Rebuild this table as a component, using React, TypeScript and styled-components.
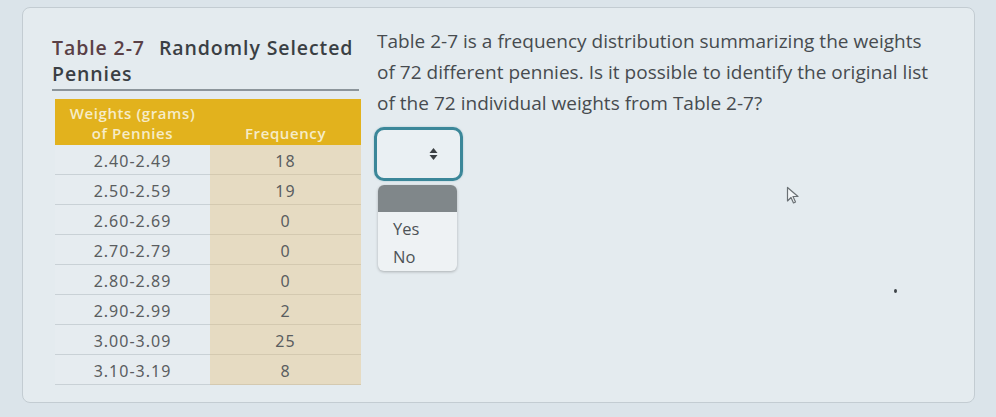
import React from "react";
import styled, { createGlobalStyle } from "styled-components";

const Global = createGlobalStyle`
  html, body { margin: 0; padding: 0; }
  body {
    background: #dbe4ea;
    width: 996px;
    height: 417px;
    overflow: hidden;
    font-family: "Noto Sans", "Liberation Sans", sans-serif;
  }
`;

const Page = styled.div`
  padding: 7px 21px 0 22px;
`;

const Card = styled.div`
  position: relative;
  box-sizing: border-box;
  height: 396px;
  border: 1.5px solid #c3ccd2;
  border-radius: 8px;
  background: #e4ebef;
  padding: 27px 20px 0 29px;
  display: flex;
  gap: 16px;
`;

const Left = styled.div`
  width: 309px;
  display: flex;
  flex-direction: column;
`;

const Title = styled.div`
  font-family: "Open Sans", "Noto Sans", sans-serif;
  font-size: 19.5px;
  font-weight: 600;
  line-height: 26px;
  color: #3a3f44;
  letter-spacing: 0.9px;
  padding-bottom: 2px;
  margin-right: 2px;
  border-bottom: 2px solid #8c959b;
  white-space: nowrap;
`;

const TableNo = styled.span`
  color: #5a4046;
  margin-right: 14px;
`;

const Table = styled.div`
  margin-top: 8px;
  margin-left: 3px;
  display: grid;
  grid-template-columns: 155px 151px;
`;

const HeadCell = styled.div`
  background: #e2b21d;
  height: 46px;
  box-sizing: border-box;
  padding-bottom: 2px;
  display: flex;
  flex-direction: column;
  justify-content: flex-end;
  align-items: center;
  font-family: "Open Sans", "Noto Sans", sans-serif;
  font-weight: 600;
  font-size: 15px;
  line-height: 20px;
  letter-spacing: 0.6px;
  color: #f6ecc8;
  text-align: center;
`;

const Cell = styled.div<{ $freq?: boolean }>`
  height: 30px;
  box-sizing: border-box;
  display: flex;
  align-items: center;
  justify-content: center;
  font-family: "Noto Sans", sans-serif;
  font-size: 16px;
  letter-spacing: 1px;
  color: #5a5d60;
  background: ${(p) => (p.$freq ? "#e6dbc2" : "#e6ecf0")};
  border-bottom: 1px solid ${(p) => (p.$freq ? "#d4c9b0" : "#c9d1d6")};
  padding-top: 3px;
`;

const Right = styled.div`
  display: flex;
  flex-direction: column;
  align-items: flex-start;
  margin-top: -9px;
`;

const Question = styled.p`
  margin: 0;
  font-family: "Open Sans", "Noto Sans", sans-serif;
  font-size: 19px;
  line-height: 31px;
  letter-spacing: 0.02px;
  color: #474b4f;
  white-space: nowrap;
`;

const SelectWrap = styled.div`
  position: relative;
  margin-top: 8px;
  margin-left: -3px;
`;

const SelectBox = styled.div`
  width: 89px;
  height: 54px;
  box-sizing: border-box;
  border: 3px solid #3b8799;
  border-radius: 10px;
  background: #eaf0f3;
  display: flex;
  align-items: center;
  justify-content: flex-end;
  padding-right: 22px;
  box-shadow: 0 0 2px rgba(60, 135, 153, 0.4);
`;

const Menu = styled.div`
  position: absolute;
  top: 58px;
  left: 4px;
  width: 79px;
  height: 86px;
  border-radius: 6px;
  overflow: hidden;
  background: #eef2f4;
  box-shadow: 0 1px 3px rgba(0, 0, 0, 0.25);
  display: flex;
  flex-direction: column;
`;

const MenuHead = styled.div`
  flex: 0 0 27px;
  margin-bottom: 3px;
  background: #80878a;
`;

const Option = styled.div`
  font-family: "Open Sans", "Noto Sans", sans-serif;
  font-size: 16.5px;
  line-height: 28px;
  padding-left: 15px;
  color: #4d5256;
`;

const Cursor = styled.div`
  position: absolute;
  left: 763px;
  top: 178px;
`;

const Dot = styled.div`
  position: absolute;
  left: 871px;
  top: 281px;
  width: 3px;
  height: 4px;
  border-radius: 50%;
  background: #3e4448;
`;

const rows: [string, string][] = [
  ["2.40-2.49", "18"],
  ["2.50-2.59", "19"],
  ["2.60-2.69", "0"],
  ["2.70-2.79", "0"],
  ["2.80-2.89", "0"],
  ["2.90-2.99", "2"],
  ["3.00-3.09", "25"],
  ["3.10-3.19", "8"],
];

export default function App() {
  return (
    <>
      <Global />
      <Page>
        <Card>
          <Left>
            <Title>
              <TableNo>Table 2-7</TableNo>Randomly Selected
              <br />
              Pennies
            </Title>
            <Table>
              <HeadCell>
                <span>Weights (grams)</span>
                <span>of Pennies</span>
              </HeadCell>
              <HeadCell>Frequency</HeadCell>
              {rows.map(([w, f]) => (
                <React.Fragment key={w}>
                  <Cell>{w}</Cell>
                  <Cell $freq>{f}</Cell>
                </React.Fragment>
              ))}
            </Table>
          </Left>
          <Right>
            <Question>
              Table 2-7 is a frequency distribution summarizing the weights
              <br />
              of 72 different pennies. Is it possible to identify the original list
              <br />
              of the 72 individual weights from Table 2-7?
            </Question>
            <SelectWrap>
              <SelectBox>
                <svg width="9" height="14" viewBox="0 0 9 14">
                  <path d="M4.5 1 L8.5 6 L0.5 6 Z" fill="#3c4043" />
                  <path d="M4.5 13 L8.5 8 L0.5 8 Z" fill="#3c4043" />
                </svg>
              </SelectBox>
              <Menu>
                <MenuHead />
                <Option>Yes</Option>
                <Option>No</Option>
              </Menu>
            </SelectWrap>
          </Right>
          <Cursor>
            <svg width="16" height="20" viewBox="0 0 16 20">
              <path
                d="M1.5 1.5 L1.5 15 L5 11.5 L7.5 17 L9.5 16 L7 10.5 L12 10.5 Z"
                fill="#f2f5f7"
                stroke="#6b7175"
                strokeWidth="1.2"
                strokeLinejoin="round"
              />
            </svg>
          </Cursor>
          <Dot />
        </Card>
      </Page>
    </>
  );
}
